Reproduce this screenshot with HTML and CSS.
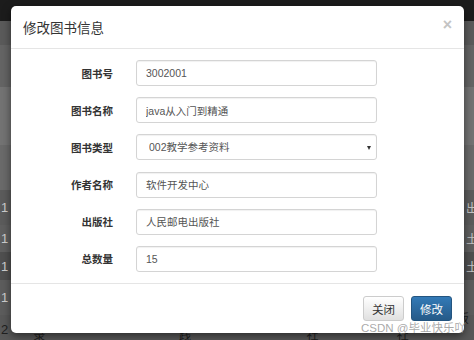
FILE: index.html
```html
<!DOCTYPE html>
<html lang="zh">
<head>
<meta charset="utf-8">
<title>修改图书信息</title>
<link rel="stylesheet" href="styles.css">
</head>
<body>
<div class="bg">
  <div class="band b1"></div>
  <div class="band b2"></div>
  <div class="band b3"></div>
  <div class="band b4"></div>
  <div class="band b5"></div>
  <div class="band b6"><span class="l">1</span><span class="r">出</span></div>
  <div class="band b7"><span class="l">1</span><span class="r">土</span></div>
  <div class="band b8"><span class="l">1</span><span class="r">土</span></div>
  <div class="band b9"><span class="l">1</span></div>
  <div class="band b10"><span class="l">2</span><span class="c c1">004图书工具书目录</span><span class="c c2">解析原理与实践</span><span class="c c3">水利出版社</span><span class="c c4">人民邮电出版社</span></div>
</div>

<div class="modal">
  <div class="modal-header">
    <h4 class="modal-title">修改图书信息</h4>
    <span class="close">×</span>
  </div>
  <div class="modal-body">
    <div class="row"><label>图书号</label><input class="field" value="3002001"></div>
    <div class="row"><label>图书名称</label><input class="field" value="java从入门到精通"></div>
    <div class="row"><label>图书类型</label><div class="select-wrap"><select class="field sel"><option>002教学参考资料</option></select></div></div>
    <div class="row"><label>作者名称</label><input class="field" value="软件开发中心"></div>
    <div class="row"><label>出版社</label><input class="field" value="人民邮电出版社"></div>
    <div class="row"><label>总数量</label><input class="field" value="15"></div>
  </div>
  <div class="modal-footer">
    <button class="btn btn-default">关闭</button>
    <button class="btn btn-primary">修改</button>
  </div>
</div>
<div class="watermark">CSDN @毕业快乐吖</div>
</body>
</html>
```
FILE: styles.css
```css
* { box-sizing: border-box; }
html, body {
  margin: 0;
  padding: 0;
  width: 474px;
  height: 340px;
  overflow: hidden;
  font-family: "Liberation Sans", "Noto Sans CJK SC", sans-serif;
}
.bg {
  display: flex;
  flex-direction: column;
  width: 474px;
  height: 340px;
}
.band {
  display: flex;
  align-items: center;
  position: relative;
  font-size: 12px;
  color: #262626;
}
.b1 { height: 21px; background: #1c1c1c; }
.b2 { height: 24px; background: #5a5a5a; }
.b3 { height: 42px; background: #646464; }
.b4 { height: 58px; background: #737373; }
.b5 { height: 45px; background: #6a6a6a; }
.b6 { height: 35px; background: #5b5b5b; }
.b7 { height: 27px; background: #5f5f5f; }
.b8 { height: 28px; background: #4f4f4f; }
.b9 { height: 35px; background: #5c5c5c; }
.b10 { height: 25px; background: #585858; align-items: flex-end; }
.band .l { margin-left: 1px; color: #cfcfcf; font-size: 13px; }
.band .r { margin-left: auto; margin-right: -4px; color: #c4c4c4; font-size: 12px; }
.b10 .l { color: #202020; margin-bottom: 3px; }
.b10 .c { color: #1e1e1e; font-size: 12px; margin-bottom: -3px; }
.c1 { margin-left: 25px; }
.c2 { margin-left: 50px; }
.c3 { margin-left: 50px; }
.c4 { margin-left: 35px; }

.modal {
  position: absolute;
  left: 11px;
  top: 6px;
  width: 453px;
  height: 327px;
  background: #fff;
  border-radius: 5px;
  box-shadow: 0 3px 8px rgba(0,0,0,0.5);
  display: flex;
  flex-direction: column;
}
.modal-header {
  height: 43px;
  border-bottom: 1px solid #e5e5e5;
  display: flex;
  align-items: center;
  padding: 0 12px;
}
.modal-title {
  margin: 0;
  font-size: 13.5px;
  font-weight: normal;
  color: #333;
  padding-bottom: 1px;
}
.close {
  margin-left: auto;
  margin-top: -5px;
  color: #c4c4c4;
  font-size: 16px;
  font-weight: bold;
  line-height: 1;
}
.modal-body {
  height: 234px;
  padding-top: 11px;
  display: flex;
  flex-direction: column;
  gap: 11.2px;
}
.row {
  display: grid;
  grid-template-columns: 102px 241px;
  column-gap: 23px;
  align-items: center;
  height: 26px;
}
.row label {
  text-align: right;
  font-weight: bold;
  font-size: 10.5px;
  color: #333;
}
.field {
  width: 241px;
  height: 26px;
  border: 1px solid #d4d4d4;
  border-radius: 3px;
  padding: 0 9px;
  font-family: "Liberation Sans", "Noto Sans CJK SC", sans-serif;
  font-size: 10.5px;
  color: #555;
  background: #fff;
  box-shadow: inset 0 1px 1px rgba(0,0,0,0.06);
  outline: none;
}
.select-wrap { position: relative; width: 241px; height: 26px; }
.sel {
  appearance: none;
  -webkit-appearance: none;
  padding-left: 12px;
}
.select-wrap::after {
  content: "";
  position: absolute;
  right: 6px;
  top: 12px;
  border-left: 2.5px solid transparent;
  border-right: 2.5px solid transparent;
  border-top: 4px solid #333;
}
.modal-footer {
  flex: 1;
  border-top: 1px solid #e5e5e5;
  display: flex;
  justify-content: flex-end;
  align-items: flex-start;
  gap: 7px;
  padding: 12px 12px 0 0;
}
.btn {
  width: 41px;
  height: 25px;
  border-radius: 3px;
  font-family: "Liberation Sans", "Noto Sans CJK SC", sans-serif;
  font-size: 11.5px;
  padding: 0;
}
.btn-default {
  background: linear-gradient(#ffffff, #e0e0e0);
  border: 1px solid #ccc;
  color: #333;
}
.btn-primary {
  background: linear-gradient(#337ab7, #265a88);
  border: 1px solid #245580;
  color: #fff;
}
.watermark {
  position: absolute;
  left: 361px;
  top: 323px;
  line-height: 1;
  font-size: 11.5px;
  color: rgba(140,140,140,0.75);
  white-space: nowrap;
}
```
